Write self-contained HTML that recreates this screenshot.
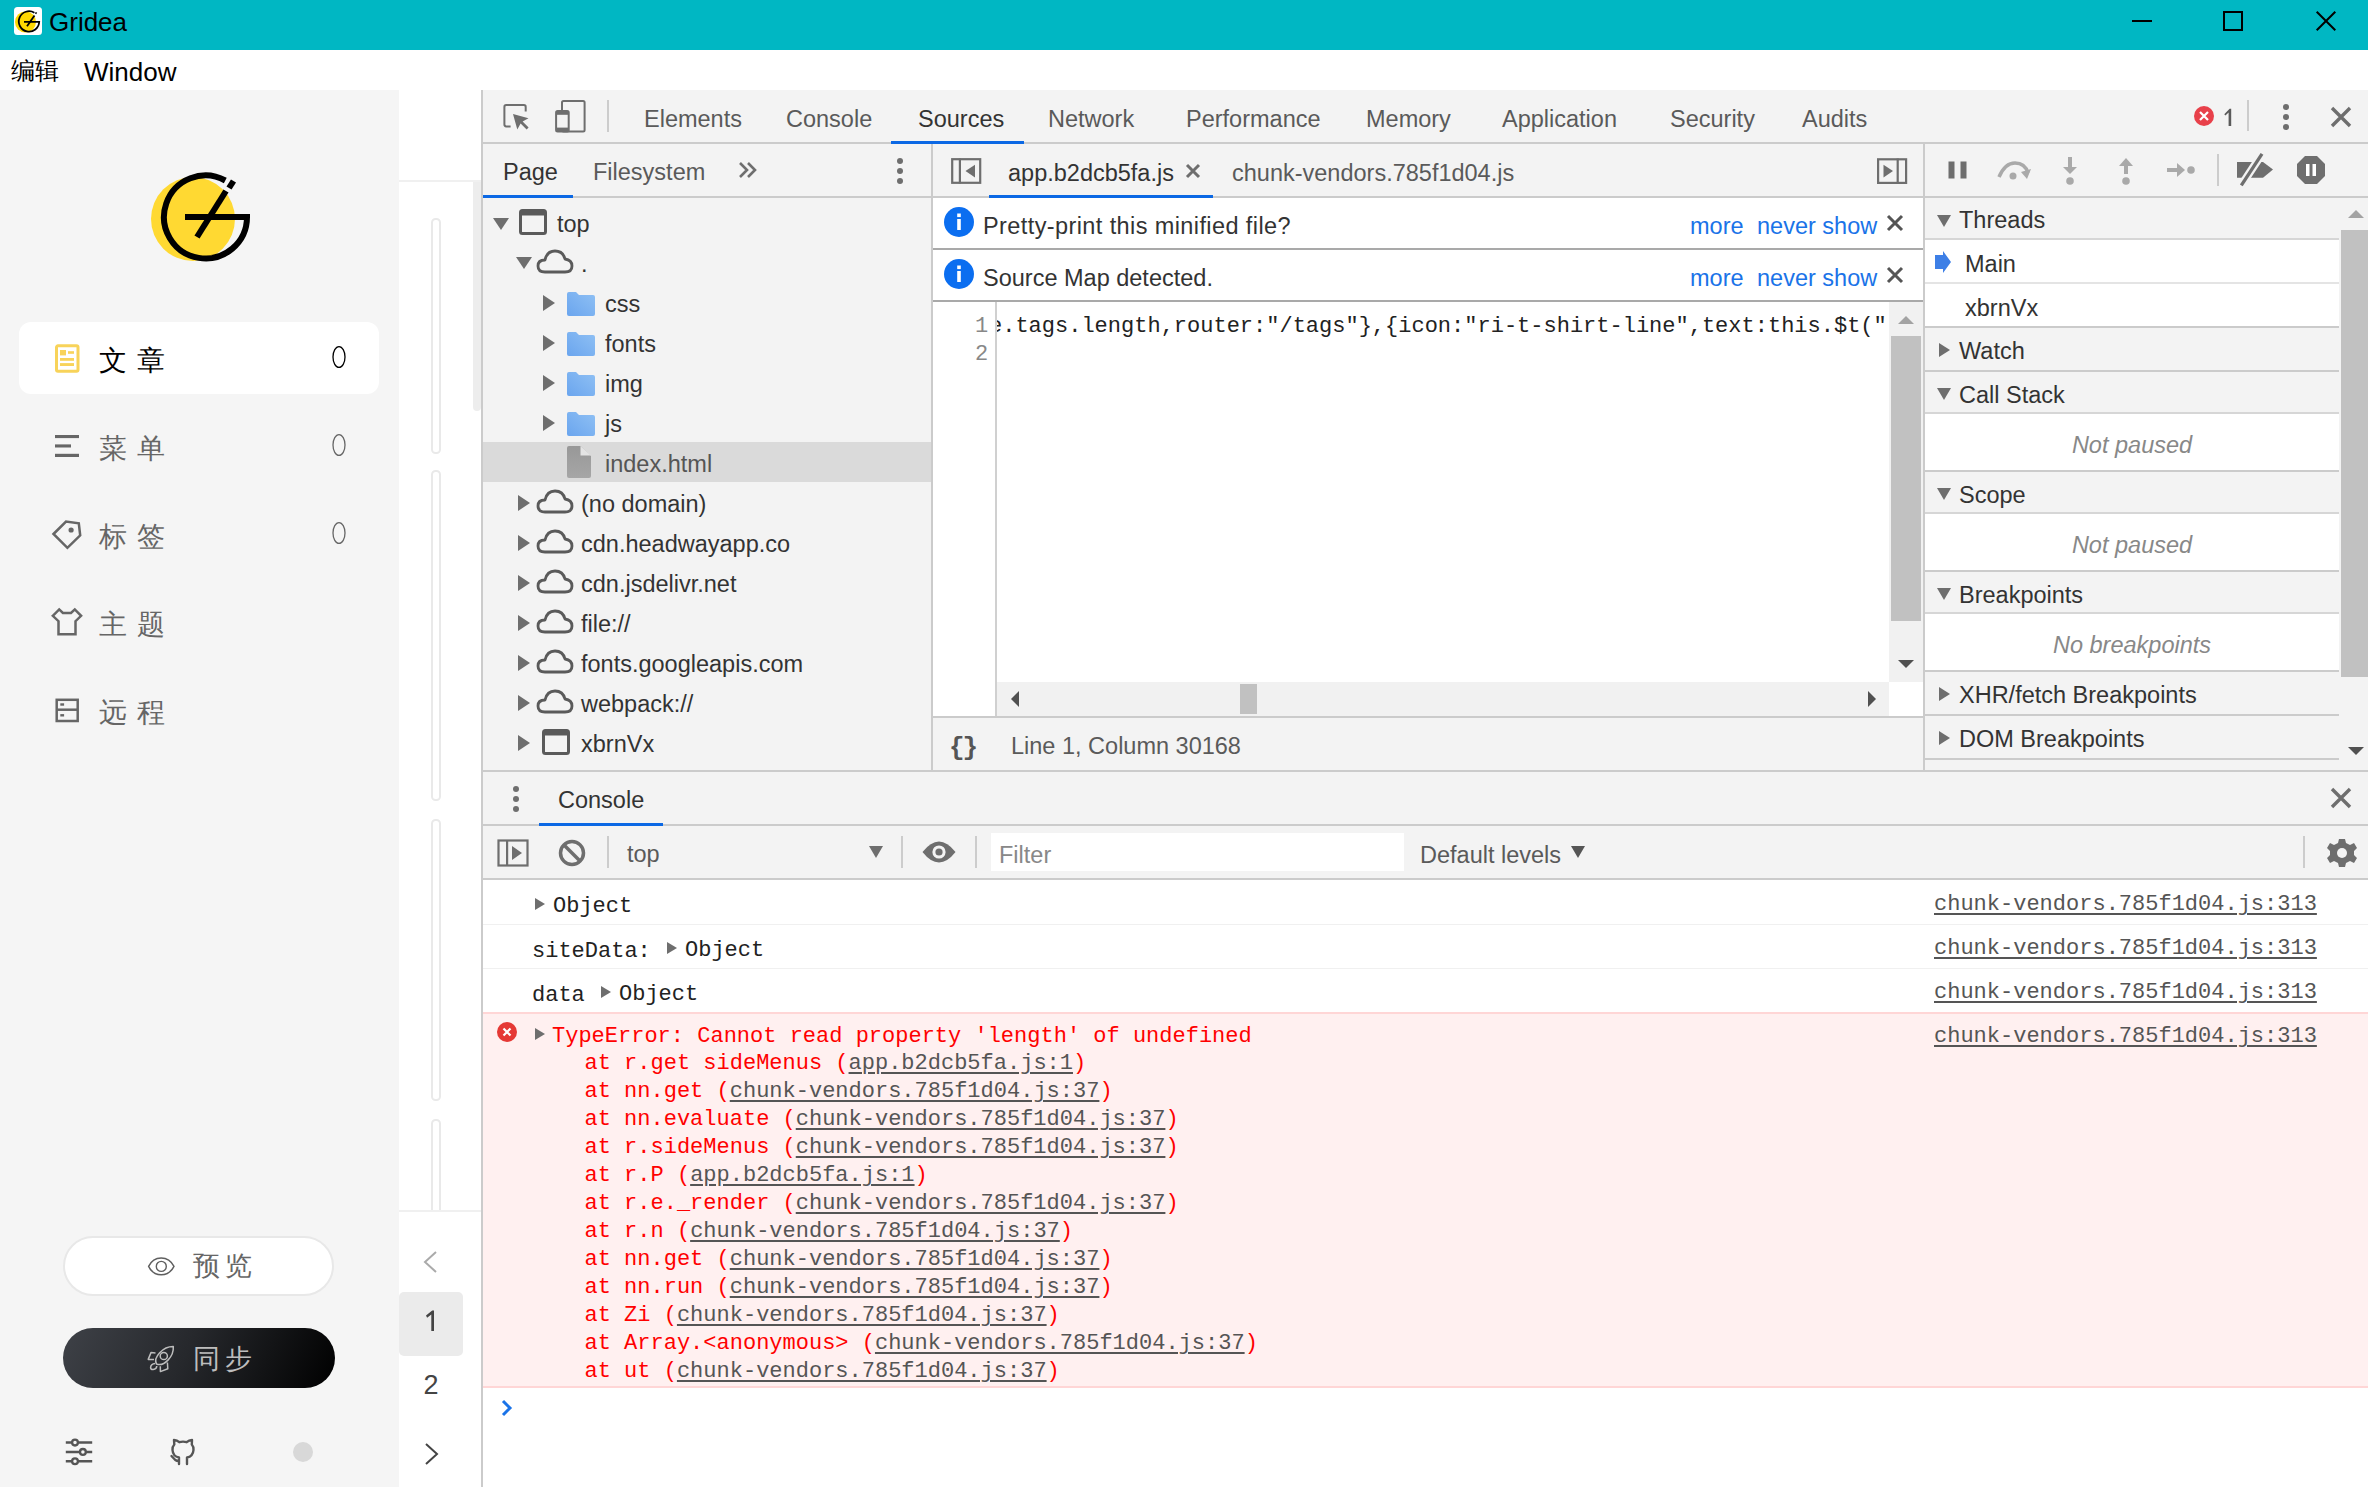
<!DOCTYPE html>
<html><head><meta charset="utf-8"><style>
html,body{margin:0;padding:0;width:2368px;height:1487px;overflow:hidden;background:#fff;position:relative;font-family:'Liberation Sans', sans-serif}
.t{position:absolute;white-space:pre;line-height:1}
svg{display:block}
</style></head><body>
<div style="position:absolute;left:0px;top:0px;width:2368px;height:50px;background:#00b7c3"></div>
<svg style="position:absolute;left:14px;top:7px;" width="28" height="28" viewBox="0 0 28 28"><rect x="0" y="0" width="28" height="28" rx="3.5" fill="#fff"/><circle cx="11.5" cy="15" r="10.5" fill="#ffd800"/><path d="M20.4 5.8 A10.2 10.2 0 1 0 25.2 14.8 L10 14.8" fill="none" stroke="#000" stroke-width="1.8"/><path d="M13 19.3 L20.5 8.4" stroke="#000" stroke-width="1.8"/><path d="M21.5 6.8 L22.5 5.4" stroke="#000" stroke-width="1.6"/></svg>
<div class="t" style="left:49px;top:8.99px;font-size:26px;color:#000;font-family:'Liberation Sans', sans-serif;">Gridea</div>
<div style="position:absolute;left:2132px;top:20px;width:20px;height:2px;background:#000"></div>
<div style="position:absolute;left:2223px;top:11px;width:20px;height:20px;border:2px solid #000;box-sizing:border-box"></div>
<svg style="position:absolute;left:2315px;top:10px;" width="22" height="22" viewBox="0 0 22 22"><path d="M1.7 1.7 L20.3 20.3 M20.3 1.7 L1.7 20.3" stroke="#000" stroke-width="2"/></svg>
<div style="position:absolute;left:0px;top:50px;width:2368px;height:40px;background:#fff"></div>
<div class="t" style="left:11px;top:60.32px;font-size:23.5px;color:#000;font-family:'Liberation Sans', sans-serif;">编辑</div>
<div class="t" style="left:84px;top:58.99px;font-size:26px;color:#000;font-family:'Liberation Sans', sans-serif;">Window</div>
<div style="position:absolute;left:0px;top:90px;width:399px;height:1397px;background:#f5f5f5"></div>
<svg style="position:absolute;left:140px;top:160px;" width="120" height="120" viewBox="0 0 120 120"><circle cx="53" cy="59" r="42" fill="#ffd932"/>
<path d="M85.3 20.5 A41.5 41.5 0 1 0 107 57 L45 57" fill="none" stroke="#000" stroke-width="6"/>
<path d="M57 77 L86 31" stroke="#000" stroke-width="6"/>
<path d="M89 28 L93.5 21" stroke="#000" stroke-width="6"/></svg>
<div style="position:absolute;left:19px;top:322px;width:360px;height:72px;background:#fff;border-radius:12px"></div>
<div class="t" style="left:99px;top:340.5px;font-size:28px;line-height:40px;color:#000;font-family:'Liberation Sans', sans-serif;letter-spacing:1px">文 章</div>
<svg style="position:absolute;left:330px;top:344px;" width="18" height="26" viewBox="0 0 18 26"><ellipse cx="9" cy="13" rx="6" ry="10.4" fill="none" stroke="#000" stroke-width="1.3"/></svg>
<div class="t" style="left:99px;top:428.5px;font-size:28px;line-height:40px;color:#666;font-family:'Liberation Sans', sans-serif;letter-spacing:1px">菜 单</div>
<svg style="position:absolute;left:330px;top:432px;" width="18" height="26" viewBox="0 0 18 26"><ellipse cx="9" cy="13" rx="6" ry="10.4" fill="none" stroke="#666" stroke-width="1.3"/></svg>
<div class="t" style="left:99px;top:516.5px;font-size:28px;line-height:40px;color:#666;font-family:'Liberation Sans', sans-serif;letter-spacing:1px">标 签</div>
<svg style="position:absolute;left:330px;top:520px;" width="18" height="26" viewBox="0 0 18 26"><ellipse cx="9" cy="13" rx="6" ry="10.4" fill="none" stroke="#666" stroke-width="1.3"/></svg>
<div class="t" style="left:99px;top:604.5px;font-size:28px;line-height:40px;color:#666;font-family:'Liberation Sans', sans-serif;letter-spacing:1px">主 题</div>
<div class="t" style="left:99px;top:692.5px;font-size:28px;line-height:40px;color:#666;font-family:'Liberation Sans', sans-serif;letter-spacing:1px">远 程</div>
<svg style="position:absolute;left:53px;top:342px;" width="28" height="32" viewBox="0 0 28 32"><rect x="3.5" y="3.8" width="21.5" height="25.5" rx="1.5" fill="none" stroke="#f8d35a" stroke-width="3"/><rect x="7" y="8" width="6" height="5.4" fill="#f8d35a"/><rect x="15" y="9.2" width="6" height="2.6" fill="#f8d35a"/><rect x="7" y="16" width="14" height="2.8" fill="#f8d35a"/><rect x="7" y="21.1" width="14" height="2.9" fill="#f8d35a"/></svg>
<svg style="position:absolute;left:53px;top:432px;" width="28" height="28" viewBox="0 0 28 28"><rect x="2" y="3" width="24" height="3.1" fill="#666"/><rect x="2" y="12.4" width="16" height="3.1" fill="#666"/><rect x="2" y="21.8" width="24" height="3.2" fill="#666"/></svg>
<svg style="position:absolute;left:40px;top:500px;" width="50" height="240" viewBox="0 0 50 240"><g fill="none" stroke="#666" stroke-width="2.5" stroke-linejoin="miter"><path d="M13.5 34 L26 21.5 L38.8 23.3 L40.2 35.4 L27.4 47.8 Z"/><path d="M12.8 115.8 L19.2 109.4 L22.9 113 L31 113 L34.8 109.4 L41.1 115.8 L35.5 121.2 L35.5 134.3 L18.5 134.3 L18.5 121.2 Z"/><rect x="16.7" y="199.8" width="21" height="21.2"/><path d="M16.7 209.7 L37.7 209.7"/></g><circle cx="31.1" cy="30" r="2.6" fill="#666"/><rect x="20.3" y="203.3" width="3.8" height="2.4" fill="#666"/><rect x="20.3" y="214.1" width="3.8" height="2.4" fill="#666"/></svg>
<div style="position:absolute;left:63px;top:1236px;width:271px;height:60px;background:#fff;border:2px solid #e8e8e8;border-radius:30px;box-sizing:border-box"></div>
<svg style="position:absolute;left:146px;top:1254px;" width="30" height="26" viewBox="0 0 30 26"><path d="M2.6 12.4 C8 1.2 22.3 1.2 28 12.4 C22.3 23.6 8 23.6 2.6 12.4 Z" fill="none" stroke="#5f5f5f" stroke-width="1.4"/><circle cx="15.3" cy="12.4" r="5" fill="none" stroke="#5f5f5f" stroke-width="1.4"/></svg>
<div class="t" style="left:193px;top:1246px;font-size:27px;line-height:40px;color:#666;letter-spacing:5px">预览</div>
<div style="position:absolute;left:63px;top:1328px;width:272px;height:60px;background:linear-gradient(115deg,#3e4147 0%,#26282c 45%,#000 100%);border-radius:30px"></div>
<svg style="position:absolute;left:140px;top:1336px;" width="40" height="40" viewBox="0 0 40 40"><g fill="none" stroke="#bdbdbd" stroke-width="1.5" stroke-linejoin="round"><path d="M16.5 28 C13 21.5 23 10.5 33.3 10.6 C34 20.5 24 31 16.5 28 Z"/><circle cx="23.8" cy="20" r="3.6"/><path d="M15.5 17 L11 16.6 L8.2 23.4 L14 23.6"/><path d="M27.4 26.5 L27.8 32.8 L20.4 35.6 L20.3 30.2"/><path d="M15.2 27.6 Q10.8 28 10.6 31.6 Q10.8 33.8 13.2 33.6 Q16.6 33.2 16.8 30"/></g></svg>
<div class="t" style="left:193px;top:1339px;font-size:27px;line-height:40px;color:#bdbdbd;letter-spacing:5px">同步</div>
<svg style="position:absolute;left:60px;top:1432px;" width="40" height="40" viewBox="0 0 40 40"><path d="M5.8 10.6 L32.2 10.6 M5.8 19.9 L32.2 19.9 M5.8 29.2 L32.2 29.2" stroke="#555" stroke-width="2.5"/><circle cx="15" cy="10.6" r="2.9" fill="#f5f5f5" stroke="#555" stroke-width="2.3"/><circle cx="22.9" cy="19.9" r="2.9" fill="#f5f5f5" stroke="#555" stroke-width="2.3"/><circle cx="15" cy="29.2" r="2.9" fill="#f5f5f5" stroke="#555" stroke-width="2.3"/></svg>
<svg style="position:absolute;left:168px;top:1437px;" width="30" height="30" viewBox="0 0 30 30"><path d="M11 27 L11 20.5 Q5 19.5 4.5 13 Q4.3 9.5 6.3 7.5 L6 3 Q9 3 11.3 5.2 Q15 4 18.7 5.2 Q21 3 24 3 L23.8 7.5 Q25.7 9.5 25.5 13 Q25 19.5 19 20.5 L19 27 M3.5 19 L7.3 23 Q9 24.2 11 24" fill="none" stroke="#555" stroke-width="2.4" stroke-linejoin="round" stroke-linecap="round"/></svg>
<div style="position:absolute;left:293px;top:1442px;width:20px;height:20px;border-radius:50%;background:#d8d8d8"></div>
<div style="position:absolute;left:399px;top:90px;width:82px;height:1397px;background:#fff"></div>
<div style="position:absolute;left:399px;top:180px;width:82px;height:2px;background:#f0f0f0"></div>
<div style="position:absolute;left:473px;top:182px;width:8px;height:229px;background:#ededed;border-radius:0 0 4px 4px"></div>
<div style="position:absolute;left:431px;top:218px;width:10px;height:236px;border:2px solid #e9e9e9;border-radius:4.5px;box-sizing:border-box"></div>
<div style="position:absolute;left:431px;top:470px;width:10px;height:331px;border:2px solid #e9e9e9;border-radius:4.5px;box-sizing:border-box"></div>
<div style="position:absolute;left:431px;top:819px;width:10px;height:282px;border:2px solid #e9e9e9;border-radius:4.5px;box-sizing:border-box"></div>
<div style="position:absolute;left:431px;top:1119px;width:10px;height:121px;border:2px solid #e9e9e9;border-radius:4.5px;box-sizing:border-box"></div>
<div style="position:absolute;left:399px;top:1210px;width:82px;height:277px;background:#fff"></div>
<div style="position:absolute;left:399px;top:1210px;width:82px;height:2px;background:#f0f0f0"></div>
<svg style="position:absolute;left:421px;top:1250px;" width="20" height="24" viewBox="0 0 20 24"><path d="M15 2 L4 12 L15 22" fill="none" stroke="#aaa" stroke-width="2"/></svg>
<div style="position:absolute;left:399px;top:1292px;width:64px;height:64px;background:#ebebeb;border-radius:5px"></div>
<svg style="position:absolute;left:420px;top:1305px;" width="20" height="30" viewBox="0 0 20 30"><path d="M6 10.6 L12.2 5.6 L14 5.6 L14 26 L11.3 26 L11.3 9.4 L7.1 12.7 Z" fill="#444"/></svg>
<div class="t" style="left:399px;top:1361px;width:64px;text-align:center;font-size:27px;line-height:48px;color:#444">2</div>
<svg style="position:absolute;left:421px;top:1442px;" width="20" height="24" viewBox="0 0 20 24"><path d="M5 2 L16 12 L5 22" fill="none" stroke="#444" stroke-width="2"/></svg>
<div style="position:absolute;left:481px;top:90px;width:1887px;height:1397px;background:#f3f3f3"></div>
<div style="position:absolute;left:481px;top:90px;width:2px;height:1397px;background:#cbcbcb"></div>
<div style="position:absolute;left:483px;top:142px;width:1885px;height:2px;background:#cbcbcb"></div>
<svg style="position:absolute;left:495px;top:95px;" width="40" height="40" viewBox="0 0 40 40"><path d="M15.6 31.4 L11.2 31.4 Q9.4 31.4 9.4 29.6 L9.4 11.9 Q9.4 10.1 11.2 10.1 L28.9 10.1 Q30.7 10.1 30.7 11.9 L30.7 16.6" fill="none" stroke="#6e6e6e" stroke-width="2"/><path d="M18 19 L33.5 23.3 L27.6 26.6 L33.6 32.6 L31.6 34.6 L25.6 28.6 L22.3 34.6 Z" fill="#6e6e6e"/></svg>
<svg style="position:absolute;left:553px;top:99px;" width="36" height="36" viewBox="0 0 36 36"><rect x="9" y="2" width="22.6" height="30.6" rx="1.5" fill="none" stroke="#6e6e6e" stroke-width="2"/><rect x="3.1" y="12" width="12.6" height="20.6" rx="1.5" fill="#f3f3f3" stroke="#6e6e6e" stroke-width="2"/><rect x="3.1" y="28.6" width="12.6" height="4" fill="#6e6e6e"/><rect x="3.1" y="12" width="12.6" height="3.8" fill="#6e6e6e"/></svg>
<div style="position:absolute;left:607px;top:100px;width:2px;height:32px;background:#ccc"></div>
<div class="t" style="left:644px;top:108.11px;font-size:23.5px;color:#5a5a5a;font-family:'Liberation Sans', sans-serif;">Elements</div>
<div class="t" style="left:786px;top:108.11px;font-size:23.5px;color:#5a5a5a;font-family:'Liberation Sans', sans-serif;">Console</div>
<div class="t" style="left:918px;top:108.11px;font-size:23.5px;color:#333;font-family:'Liberation Sans', sans-serif;">Sources</div>
<div class="t" style="left:1048px;top:108.11px;font-size:23.5px;color:#5a5a5a;font-family:'Liberation Sans', sans-serif;">Network</div>
<div class="t" style="left:1186px;top:108.11px;font-size:23.5px;color:#5a5a5a;font-family:'Liberation Sans', sans-serif;">Performance</div>
<div class="t" style="left:1366px;top:108.11px;font-size:23.5px;color:#5a5a5a;font-family:'Liberation Sans', sans-serif;">Memory</div>
<div class="t" style="left:1502px;top:108.11px;font-size:23.5px;color:#5a5a5a;font-family:'Liberation Sans', sans-serif;">Application</div>
<div class="t" style="left:1670px;top:108.11px;font-size:23.5px;color:#5a5a5a;font-family:'Liberation Sans', sans-serif;">Security</div>
<div class="t" style="left:1802px;top:108.11px;font-size:23.5px;color:#5a5a5a;font-family:'Liberation Sans', sans-serif;">Audits</div>
<div style="position:absolute;left:891px;top:141px;width:133px;height:3px;background:#0b68e4"></div>
<svg style="position:absolute;left:2193px;top:105px;" width="22" height="22" viewBox="0 0 22 22"><circle cx="11" cy="11" r="10" fill="#e8404a"/><path d="M7 7 L15 15 M15 7 L7 15" stroke="#fff" stroke-width="2.2"/></svg>
<svg style="position:absolute;left:2220px;top:105px;" width="16" height="24" viewBox="0 0 16 24"><path d="M4.3 9.2 L9.6 3.8 L11.2 3.8 L11.2 21 L8.6 21 L8.6 7.6 L5.4 10.6 Z" fill="#5a5a5a"/></svg>
<div style="position:absolute;left:2247px;top:100px;width:2px;height:31px;background:#ccc"></div>
<svg style="position:absolute;left:2280px;top:103px;" width="12" height="28" viewBox="0 0 12 28"><circle cx="6" cy="4" r="3" fill="#6e6e6e"/><circle cx="6" cy="14" r="3" fill="#6e6e6e"/><circle cx="6" cy="24" r="3" fill="#6e6e6e"/></svg>
<svg style="position:absolute;left:2329px;top:105px;" width="24" height="24" viewBox="0 0 24 24"><path d="M3 3 L21 21 M21 3 L3 21" stroke="#6e6e6e" stroke-width="3.4"/></svg>
<div style="position:absolute;left:483px;top:196px;width:448px;height:2px;background:#cbcbcb"></div>
<div class="t" style="left:503px;top:161.11px;font-size:23.5px;color:#333;font-family:'Liberation Sans', sans-serif;">Page</div>
<div class="t" style="left:593px;top:161.11px;font-size:23.5px;color:#5a5a5a;font-family:'Liberation Sans', sans-serif;">Filesystem</div>
<div style="position:absolute;left:483px;top:195px;width:90px;height:3px;background:#0b68e4"></div>
<svg style="position:absolute;left:737px;top:160px;" width="22" height="20" viewBox="0 0 22 20"><path d="M3 3 L10 10 L3 17 M11 3 L18 10 L11 17" fill="none" stroke="#6e6e6e" stroke-width="2.6"/></svg>
<svg style="position:absolute;left:894px;top:157px;" width="12" height="28" viewBox="0 0 12 28"><circle cx="6" cy="4" r="3" fill="#6e6e6e"/><circle cx="6" cy="14" r="3" fill="#6e6e6e"/><circle cx="6" cy="24" r="3" fill="#6e6e6e"/></svg>
<div style="position:absolute;left:931px;top:144px;width:2px;height:626px;background:#cbcbcb"></div>
<div style="position:absolute;left:483px;top:442px;width:448px;height:40px;background:#dadada"></div>
<svg style="position:absolute;left:493px;top:217px;" width="16" height="14" viewBox="0 0 16 14"><path d="M0 1 L16 1 L8 13 Z" fill="#6e6e6e"/></svg>
<svg style="position:absolute;left:519px;top:209px;" width="28" height="26" viewBox="0 0 28 26"><rect x="1.5" y="1.5" width="25" height="23" rx="2" fill="none" stroke="#5a5a5a" stroke-width="3"/><rect x="1.5" y="1.5" width="25" height="5" fill="#5a5a5a"/></svg>
<div class="t" style="left:557px;top:213.11px;font-size:23.5px;color:#333;font-family:'Liberation Sans', sans-serif;">top</div>
<svg style="position:absolute;left:516px;top:256px;" width="16" height="14" viewBox="0 0 16 14"><path d="M0 1 L16 1 L8 13 Z" fill="#6e6e6e"/></svg>
<svg style="position:absolute;left:536px;top:249px;" width="38" height="26" viewBox="0 0 38 26"><path d="M9 23 Q2 23 2 17 Q2 11 9 11 Q11 2 19 2 Q27 2 29 10 Q36 11 36 17 Q36 23 29 23 Z" fill="none" stroke="#5a5a5a" stroke-width="2.8" stroke-linejoin="round"/></svg>
<div class="t" style="left:581px;top:253.11px;font-size:23.5px;color:#333;font-family:'Liberation Sans', sans-serif;">.</div>
<svg style="position:absolute;left:542px;top:295px;" width="14" height="16" viewBox="0 0 14 16"><path d="M1 0 L13 8 L1 16 Z" fill="#6e6e6e"/></svg>
<svg style="position:absolute;left:566px;top:291px;" width="30" height="26" viewBox="0 0 30 26"><defs><linearGradient id="fo1" x1="0" y1="1" x2="1" y2="0"><stop offset="0" stop-color="#6aa5ee"/><stop offset="1" stop-color="#8fc0f4"/></linearGradient></defs><path d="M1 3 Q1 1 3 1 L10 1 L13 4 L27 4 Q29 4 29 6 L29 23 Q29 25 27 25 L3 25 Q1 25 1 23 Z" fill="url(#fo1)"/></svg>
<div class="t" style="left:605px;top:293.11px;font-size:23.5px;color:#333;font-family:'Liberation Sans', sans-serif;">css</div>
<svg style="position:absolute;left:542px;top:335px;" width="14" height="16" viewBox="0 0 14 16"><path d="M1 0 L13 8 L1 16 Z" fill="#6e6e6e"/></svg>
<svg style="position:absolute;left:566px;top:331px;" width="30" height="26" viewBox="0 0 30 26"><defs><linearGradient id="fo2" x1="0" y1="1" x2="1" y2="0"><stop offset="0" stop-color="#6aa5ee"/><stop offset="1" stop-color="#8fc0f4"/></linearGradient></defs><path d="M1 3 Q1 1 3 1 L10 1 L13 4 L27 4 Q29 4 29 6 L29 23 Q29 25 27 25 L3 25 Q1 25 1 23 Z" fill="url(#fo2)"/></svg>
<div class="t" style="left:605px;top:333.11px;font-size:23.5px;color:#333;font-family:'Liberation Sans', sans-serif;">fonts</div>
<svg style="position:absolute;left:542px;top:375px;" width="14" height="16" viewBox="0 0 14 16"><path d="M1 0 L13 8 L1 16 Z" fill="#6e6e6e"/></svg>
<svg style="position:absolute;left:566px;top:371px;" width="30" height="26" viewBox="0 0 30 26"><defs><linearGradient id="fo3" x1="0" y1="1" x2="1" y2="0"><stop offset="0" stop-color="#6aa5ee"/><stop offset="1" stop-color="#8fc0f4"/></linearGradient></defs><path d="M1 3 Q1 1 3 1 L10 1 L13 4 L27 4 Q29 4 29 6 L29 23 Q29 25 27 25 L3 25 Q1 25 1 23 Z" fill="url(#fo3)"/></svg>
<div class="t" style="left:605px;top:373.11px;font-size:23.5px;color:#333;font-family:'Liberation Sans', sans-serif;">img</div>
<svg style="position:absolute;left:542px;top:415px;" width="14" height="16" viewBox="0 0 14 16"><path d="M1 0 L13 8 L1 16 Z" fill="#6e6e6e"/></svg>
<svg style="position:absolute;left:566px;top:411px;" width="30" height="26" viewBox="0 0 30 26"><defs><linearGradient id="fo4" x1="0" y1="1" x2="1" y2="0"><stop offset="0" stop-color="#6aa5ee"/><stop offset="1" stop-color="#8fc0f4"/></linearGradient></defs><path d="M1 3 Q1 1 3 1 L10 1 L13 4 L27 4 Q29 4 29 6 L29 23 Q29 25 27 25 L3 25 Q1 25 1 23 Z" fill="url(#fo4)"/></svg>
<div class="t" style="left:605px;top:413.11px;font-size:23.5px;color:#333;font-family:'Liberation Sans', sans-serif;">js</div>
<svg style="position:absolute;left:566px;top:445px;" width="26" height="34" viewBox="0 0 26 34"><defs><linearGradient id="fg" x1="0" y1="0" x2="0" y2="1"><stop offset="0" stop-color="#989898"/><stop offset="1" stop-color="#a6a6a6"/></linearGradient></defs><path d="M1 3 Q1 1 3 1 L14.5 1 L25 11 L25 31 Q25 33 23 33 L3 33 Q1 33 1 31 Z" fill="url(#fg)"/><path d="M14.5 1 L14.5 10.5 L25 10.5 Z" fill="#e4e4e4"/></svg>
<div class="t" style="left:605px;top:453.11px;font-size:23.5px;color:#555;font-family:'Liberation Sans', sans-serif;">index.html</div>
<svg style="position:absolute;left:517px;top:495px;" width="14" height="16" viewBox="0 0 14 16"><path d="M1 0 L13 8 L1 16 Z" fill="#6e6e6e"/></svg>
<svg style="position:absolute;left:536px;top:489px;" width="38" height="26" viewBox="0 0 38 26"><path d="M9 23 Q2 23 2 17 Q2 11 9 11 Q11 2 19 2 Q27 2 29 10 Q36 11 36 17 Q36 23 29 23 Z" fill="none" stroke="#5a5a5a" stroke-width="2.8" stroke-linejoin="round"/></svg>
<div class="t" style="left:581px;top:493.11px;font-size:23.5px;color:#333;font-family:'Liberation Sans', sans-serif;">(no domain)</div>
<svg style="position:absolute;left:517px;top:535px;" width="14" height="16" viewBox="0 0 14 16"><path d="M1 0 L13 8 L1 16 Z" fill="#6e6e6e"/></svg>
<svg style="position:absolute;left:536px;top:529px;" width="38" height="26" viewBox="0 0 38 26"><path d="M9 23 Q2 23 2 17 Q2 11 9 11 Q11 2 19 2 Q27 2 29 10 Q36 11 36 17 Q36 23 29 23 Z" fill="none" stroke="#5a5a5a" stroke-width="2.8" stroke-linejoin="round"/></svg>
<div class="t" style="left:581px;top:533.11px;font-size:23.5px;color:#333;font-family:'Liberation Sans', sans-serif;">cdn.headwayapp.co</div>
<svg style="position:absolute;left:517px;top:575px;" width="14" height="16" viewBox="0 0 14 16"><path d="M1 0 L13 8 L1 16 Z" fill="#6e6e6e"/></svg>
<svg style="position:absolute;left:536px;top:569px;" width="38" height="26" viewBox="0 0 38 26"><path d="M9 23 Q2 23 2 17 Q2 11 9 11 Q11 2 19 2 Q27 2 29 10 Q36 11 36 17 Q36 23 29 23 Z" fill="none" stroke="#5a5a5a" stroke-width="2.8" stroke-linejoin="round"/></svg>
<div class="t" style="left:581px;top:573.11px;font-size:23.5px;color:#333;font-family:'Liberation Sans', sans-serif;">cdn.jsdelivr.net</div>
<svg style="position:absolute;left:517px;top:615px;" width="14" height="16" viewBox="0 0 14 16"><path d="M1 0 L13 8 L1 16 Z" fill="#6e6e6e"/></svg>
<svg style="position:absolute;left:536px;top:609px;" width="38" height="26" viewBox="0 0 38 26"><path d="M9 23 Q2 23 2 17 Q2 11 9 11 Q11 2 19 2 Q27 2 29 10 Q36 11 36 17 Q36 23 29 23 Z" fill="none" stroke="#5a5a5a" stroke-width="2.8" stroke-linejoin="round"/></svg>
<div class="t" style="left:581px;top:613.11px;font-size:23.5px;color:#333;font-family:'Liberation Sans', sans-serif;">file://</div>
<svg style="position:absolute;left:517px;top:655px;" width="14" height="16" viewBox="0 0 14 16"><path d="M1 0 L13 8 L1 16 Z" fill="#6e6e6e"/></svg>
<svg style="position:absolute;left:536px;top:649px;" width="38" height="26" viewBox="0 0 38 26"><path d="M9 23 Q2 23 2 17 Q2 11 9 11 Q11 2 19 2 Q27 2 29 10 Q36 11 36 17 Q36 23 29 23 Z" fill="none" stroke="#5a5a5a" stroke-width="2.8" stroke-linejoin="round"/></svg>
<div class="t" style="left:581px;top:653.11px;font-size:23.5px;color:#333;font-family:'Liberation Sans', sans-serif;">fonts.googleapis.com</div>
<svg style="position:absolute;left:517px;top:695px;" width="14" height="16" viewBox="0 0 14 16"><path d="M1 0 L13 8 L1 16 Z" fill="#6e6e6e"/></svg>
<svg style="position:absolute;left:536px;top:689px;" width="38" height="26" viewBox="0 0 38 26"><path d="M9 23 Q2 23 2 17 Q2 11 9 11 Q11 2 19 2 Q27 2 29 10 Q36 11 36 17 Q36 23 29 23 Z" fill="none" stroke="#5a5a5a" stroke-width="2.8" stroke-linejoin="round"/></svg>
<div class="t" style="left:581px;top:693.11px;font-size:23.5px;color:#333;font-family:'Liberation Sans', sans-serif;">webpack://</div>
<svg style="position:absolute;left:517px;top:735px;" width="14" height="16" viewBox="0 0 14 16"><path d="M1 0 L13 8 L1 16 Z" fill="#6e6e6e"/></svg>
<svg style="position:absolute;left:542px;top:729px;" width="28" height="26" viewBox="0 0 28 26"><rect x="1.5" y="1.5" width="25" height="23" rx="2" fill="none" stroke="#5a5a5a" stroke-width="3"/><rect x="1.5" y="1.5" width="25" height="5" fill="#5a5a5a"/></svg>
<div class="t" style="left:581px;top:733.11px;font-size:23.5px;color:#333;font-family:'Liberation Sans', sans-serif;">xbrnVx</div>
<div style="position:absolute;left:933px;top:196px;width:990px;height:2px;background:#cbcbcb"></div>
<svg style="position:absolute;left:950px;top:157px;" width="32" height="28" viewBox="0 0 32 28"><rect x="2.2" y="2.2" width="28" height="23.6" fill="none" stroke="#6e6e6e" stroke-width="2.2"/><rect x="8.8" y="1.5" width="2.2" height="25" fill="#6e6e6e"/><path d="M25 7.8 L15.5 14 L25 20.4 Z" fill="#6e6e6e"/></svg>
<div class="t" style="left:1008px;top:161.61px;font-size:23.5px;color:#333;font-family:'Liberation Sans', sans-serif;">app.b2dcb5fa.js</div>
<svg style="position:absolute;left:1185px;top:163px;" width="16" height="16" viewBox="0 0 16 16"><path d="M2 2 L14 14 M14 2 L2 14" stroke="#6e6e6e" stroke-width="3"/></svg>
<div style="position:absolute;left:989px;top:195px;width:224px;height:3px;background:#0b68e4"></div>
<div class="t" style="left:1232px;top:161.61px;font-size:23.5px;color:#5a5a5a;font-family:'Liberation Sans', sans-serif;">chunk-vendors.785f1d04.js</div>
<svg style="position:absolute;left:1876px;top:157px;" width="32" height="28" viewBox="0 0 32 28"><rect x="2.1" y="2.3" width="28" height="23.6" fill="none" stroke="#6e6e6e" stroke-width="2.2"/><rect x="20.6" y="1.5" width="2.2" height="25" fill="#6e6e6e"/><path d="M7.5 7.8 L17 14 L7.5 20.4 Z" fill="#6e6e6e"/></svg>
<div style="position:absolute;left:933px;top:198px;width:990px;height:50px;background:#fff"></div>
<div style="position:absolute;left:933px;top:248px;width:990px;height:2px;background:#a9a9a9"></div>
<svg style="position:absolute;left:944px;top:207px;" width="30" height="30" viewBox="0 0 30 30"><circle cx="15" cy="15" r="15" fill="#0b6ef0"/><rect x="13.2" y="12" width="3.6" height="11" fill="#fff"/><rect x="13.2" y="6.5" width="3.6" height="3.6" fill="#fff"/></svg>
<div class="t" style="left:983px;top:215.11px;font-size:23.5px;color:#333;font-family:'Liberation Sans', sans-serif;letter-spacing:0.4px">Pretty-print this minified file?</div>
<div class="t" style="left:1690px;top:215.11px;font-size:23.5px;color:#1a73e8;font-family:'Liberation Sans', sans-serif;">more</div>
<div class="t" style="left:1757px;top:215.11px;font-size:23.5px;color:#1a73e8;font-family:'Liberation Sans', sans-serif;">never show</div>
<svg style="position:absolute;left:1886px;top:214px;" width="18" height="18" viewBox="0 0 18 18"><path d="M2 2 L16 16 M16 2 L2 16" stroke="#555" stroke-width="3"/></svg>
<div style="position:absolute;left:933px;top:250px;width:990px;height:50px;background:#fff"></div>
<div style="position:absolute;left:933px;top:300px;width:990px;height:2px;background:#a9a9a9"></div>
<svg style="position:absolute;left:944px;top:259px;" width="30" height="30" viewBox="0 0 30 30"><circle cx="15" cy="15" r="15" fill="#0b6ef0"/><rect x="13.2" y="12" width="3.6" height="11" fill="#fff"/><rect x="13.2" y="6.5" width="3.6" height="3.6" fill="#fff"/></svg>
<div class="t" style="left:983px;top:267.11px;font-size:23.5px;color:#333;font-family:'Liberation Sans', sans-serif;">Source Map detected.</div>
<div class="t" style="left:1690px;top:267.11px;font-size:23.5px;color:#1a73e8;font-family:'Liberation Sans', sans-serif;">more</div>
<div class="t" style="left:1757px;top:267.11px;font-size:23.5px;color:#1a73e8;font-family:'Liberation Sans', sans-serif;">never show</div>
<svg style="position:absolute;left:1886px;top:266px;" width="18" height="18" viewBox="0 0 18 18"><path d="M2 2 L16 16 M16 2 L2 16" stroke="#555" stroke-width="3"/></svg>
<div style="position:absolute;left:933px;top:302px;width:990px;height:414px;background:#fff"></div>
<div style="position:absolute;left:995px;top:302px;width:2px;height:414px;background:#d0d0d0"></div>
<div class="t" style="left:975px;top:316.35px;font-size:22px;color:#888;font-family:'Liberation Mono', monospace;">1</div>
<div class="t" style="left:975px;top:344.15px;font-size:22px;color:#888;font-family:'Liberation Mono', monospace;">2</div>
<div style="position:absolute;left:997px;top:302px;width:892px;height:60px;overflow:hidden"><div class="t" style="left:-8px;top:13.85px;font-size:22px;color:#222;font-family:'Liberation Mono', monospace">e.tags.length,router:"/tags"},{icon:"ri-t-shirt-line",text:this.$t("</div></div>
<div style="position:absolute;left:1889px;top:302px;width:34px;height:380px;background:#f1f1f1"></div>
<div style="position:absolute;left:1891px;top:336px;width:30px;height:285px;background:#c1c1c1"></div>
<svg style="position:absolute;left:1897px;top:313px;" width="18" height="12" viewBox="0 0 18 12"><path d="M1 11 L9 3 L17 11 Z" fill="#a3a3a3"/></svg>
<svg style="position:absolute;left:1897px;top:659px;" width="18" height="12" viewBox="0 0 18 12"><path d="M1 1 L9 9 L17 1 Z" fill="#505050"/></svg>
<div style="position:absolute;left:997px;top:682px;width:892px;height:34px;background:#f1f1f1"></div>
<div style="position:absolute;left:1240px;top:684px;width:17px;height:30px;background:#c1c1c1"></div>
<svg style="position:absolute;left:1008px;top:690px;" width="12" height="18" viewBox="0 0 12 18"><path d="M11 1 L3 9 L11 17 Z" fill="#505050"/></svg>
<svg style="position:absolute;left:1867px;top:690px;" width="12" height="18" viewBox="0 0 12 18"><path d="M1 1 L9 9 L1 17 Z" fill="#505050"/></svg>
<div style="position:absolute;left:1889px;top:682px;width:34px;height:34px;background:#fff"></div>
<div style="position:absolute;left:933px;top:716px;width:990px;height:2px;background:#cbcbcb"></div>
<div class="t" style="left:949px;top:735.08px;font-size:26px;color:#555;font-family:'Liberation Mono', monospace;font-weight:bold;letter-spacing:-2px">{}</div>
<div class="t" style="left:1011px;top:735.11px;font-size:23.5px;color:#5a5a5a;font-family:'Liberation Sans', sans-serif;">Line 1, Column 30168</div>
<div style="position:absolute;left:1923px;top:144px;width:2px;height:626px;background:#cbcbcb"></div>
<div style="position:absolute;left:1925px;top:196px;width:443px;height:2px;background:#cbcbcb"></div>
<svg style="position:absolute;left:1947px;top:160px;" width="22" height="20" viewBox="0 0 22 20"><rect x="1.5" y="1.5" width="6" height="17" fill="#6e6e6e"/><rect x="13.5" y="1.5" width="6" height="17" fill="#6e6e6e"/></svg>
<svg style="position:absolute;left:1995px;top:157px;" width="40" height="28" viewBox="0 0 40 28"><path d="M4 20 Q10 6 20 6 Q30 6 33 16" fill="none" stroke="#a9a9a9" stroke-width="3.5"/><path d="M36 12 L32 22 L26 15 Z" fill="#a9a9a9"/><circle cx="18" cy="19" r="3.5" fill="#a9a9a9"/></svg>
<svg style="position:absolute;left:2060px;top:156px;" width="20" height="32" viewBox="0 0 20 32"><rect x="8" y="1" width="4" height="12" fill="#a9a9a9"/><path d="M3 11 L17 11 L10 18 Z" fill="#a9a9a9"/><circle cx="10" cy="25" r="3.8" fill="#a9a9a9"/></svg>
<svg style="position:absolute;left:2116px;top:156px;" width="20" height="32" viewBox="0 0 20 32"><rect x="8" y="8" width="4" height="10" fill="#a9a9a9"/><path d="M3 10 L17 10 L10 2 Z" fill="#a9a9a9"/><circle cx="10" cy="25" r="3.8" fill="#a9a9a9"/></svg>
<svg style="position:absolute;left:2165px;top:160px;" width="32" height="20" viewBox="0 0 32 20"><rect x="2" y="8" width="12" height="4" fill="#a9a9a9"/><path d="M12 3 L12 17 L20 10 Z" fill="#a9a9a9"/><circle cx="26" cy="10" r="3.8" fill="#a9a9a9"/></svg>
<div style="position:absolute;left:2217px;top:154px;width:2px;height:32px;background:#ccc"></div>
<svg style="position:absolute;left:2235px;top:152px;" width="40" height="36" viewBox="0 0 40 36"><path d="M2 10 L28 10 L38 17.6 L28 25.8 L2 25.8 Z" fill="#6e6e6e"/><path d="M6.3 33.4 L27 1.9" stroke="#f3f3f3" stroke-width="8"/><path d="M6.3 33.4 L27 1.9" stroke="#6e6e6e" stroke-width="3.3"/></svg>
<svg style="position:absolute;left:2296px;top:155px;" width="30" height="30" viewBox="0 0 30 30"><path d="M9 1 L21 1 L29 9 L29 21 L21 29 L9 29 L1 21 L1 9 Z" fill="#6e6e6e"/><rect x="10" y="9" width="3.5" height="12" fill="#fff"/><rect x="16.5" y="9" width="3.5" height="12" fill="#fff"/></svg>
<div style="position:absolute;left:1925px;top:198px;width:414px;height:41px;background:#f3f3f3"></div>
<svg style="position:absolute;left:1936px;top:214px;" width="16" height="14" viewBox="0 0 16 14"><path d="M1 1 L15 1 L8 13 Z" fill="#6e6e6e"/></svg>
<div class="t" style="left:1959px;top:209.11px;font-size:23.5px;color:#333;font-family:'Liberation Sans', sans-serif;">Threads</div>
<div style="position:absolute;left:1925px;top:239px;width:414px;height:44px;background:#fff"></div>
<svg style="position:absolute;left:1934px;top:251px;" width="18" height="22" viewBox="0 0 18 22"><path d="M1 4 L9 4 L9 0 L17 11 L9 22 L9 18 L1 18 Z" fill="#3d7fe6"/></svg>
<div class="t" style="left:1965px;top:253.11px;font-size:23.5px;color:#333;font-family:'Liberation Sans', sans-serif;">Main</div>
<div style="position:absolute;left:1925px;top:283px;width:414px;height:44px;background:#fff"></div>
<div class="t" style="left:1965px;top:296.51px;font-size:23.5px;color:#333;font-family:'Liberation Sans', sans-serif;">xbrnVx</div>
<div style="position:absolute;left:1925px;top:327px;width:414px;height:44px;background:#f3f3f3"></div>
<svg style="position:absolute;left:1938px;top:342px;" width="14" height="16" viewBox="0 0 14 16"><path d="M1 1 L12 8 L1 15 Z" fill="#6e6e6e"/></svg>
<div class="t" style="left:1959px;top:339.61px;font-size:23.5px;color:#333;font-family:'Liberation Sans', sans-serif;">Watch</div>
<div style="position:absolute;left:1925px;top:371px;width:414px;height:42px;background:#f3f3f3"></div>
<svg style="position:absolute;left:1936px;top:387px;" width="16" height="14" viewBox="0 0 16 14"><path d="M1 1 L15 1 L8 13 Z" fill="#6e6e6e"/></svg>
<div class="t" style="left:1959px;top:383.61px;font-size:23.5px;color:#333;font-family:'Liberation Sans', sans-serif;">Call Stack</div>
<div style="position:absolute;left:1925px;top:413px;width:414px;height:58px;background:#fff"></div>
<div class="t" style="left:1925px;top:433.61px;width:414px;text-align:center;font-size:23.5px;color:#888;font-style:italic;font-family:'Liberation Sans', sans-serif">Not paused</div>
<div style="position:absolute;left:1925px;top:471px;width:414px;height:42px;background:#f3f3f3"></div>
<svg style="position:absolute;left:1936px;top:487px;" width="16" height="14" viewBox="0 0 16 14"><path d="M1 1 L15 1 L8 13 Z" fill="#6e6e6e"/></svg>
<div class="t" style="left:1959px;top:483.61px;font-size:23.5px;color:#333;font-family:'Liberation Sans', sans-serif;">Scope</div>
<div style="position:absolute;left:1925px;top:513px;width:414px;height:58px;background:#fff"></div>
<div class="t" style="left:1925px;top:533.61px;width:414px;text-align:center;font-size:23.5px;color:#888;font-style:italic;font-family:'Liberation Sans', sans-serif">Not paused</div>
<div style="position:absolute;left:1925px;top:571px;width:414px;height:42px;background:#f3f3f3"></div>
<svg style="position:absolute;left:1936px;top:587px;" width="16" height="14" viewBox="0 0 16 14"><path d="M1 1 L15 1 L8 13 Z" fill="#6e6e6e"/></svg>
<div class="t" style="left:1959px;top:583.61px;font-size:23.5px;color:#333;font-family:'Liberation Sans', sans-serif;">Breakpoints</div>
<div style="position:absolute;left:1925px;top:613px;width:414px;height:58px;background:#fff"></div>
<div class="t" style="left:1925px;top:633.61px;width:414px;text-align:center;font-size:23.5px;color:#888;font-style:italic;font-family:'Liberation Sans', sans-serif">No breakpoints</div>
<div style="position:absolute;left:1925px;top:671px;width:414px;height:44px;background:#f3f3f3"></div>
<svg style="position:absolute;left:1938px;top:686px;" width="14" height="16" viewBox="0 0 14 16"><path d="M1 1 L12 8 L1 15 Z" fill="#6e6e6e"/></svg>
<div class="t" style="left:1959px;top:683.61px;font-size:23.5px;color:#333;font-family:'Liberation Sans', sans-serif;">XHR/fetch Breakpoints</div>
<div style="position:absolute;left:1925px;top:715px;width:414px;height:44px;background:#f3f3f3"></div>
<svg style="position:absolute;left:1938px;top:730px;" width="14" height="16" viewBox="0 0 14 16"><path d="M1 1 L12 8 L1 15 Z" fill="#6e6e6e"/></svg>
<div class="t" style="left:1959px;top:727.61px;font-size:23.5px;color:#333;font-family:'Liberation Sans', sans-serif;">DOM Breakpoints</div>
<div style="position:absolute;left:1925px;top:238px;width:414px;height:2px;background:#d6d6d6"></div>
<div style="position:absolute;left:1925px;top:282px;width:414px;height:2px;background:#e4e4e4"></div>
<div style="position:absolute;left:1925px;top:326px;width:414px;height:2px;background:#cbcbcb"></div>
<div style="position:absolute;left:1925px;top:370px;width:414px;height:2px;background:#cbcbcb"></div>
<div style="position:absolute;left:1925px;top:412px;width:414px;height:2px;background:#d6d6d6"></div>
<div style="position:absolute;left:1925px;top:470px;width:414px;height:2px;background:#cbcbcb"></div>
<div style="position:absolute;left:1925px;top:512px;width:414px;height:2px;background:#d6d6d6"></div>
<div style="position:absolute;left:1925px;top:570px;width:414px;height:2px;background:#cbcbcb"></div>
<div style="position:absolute;left:1925px;top:612px;width:414px;height:2px;background:#d6d6d6"></div>
<div style="position:absolute;left:1925px;top:670px;width:414px;height:2px;background:#cbcbcb"></div>
<div style="position:absolute;left:1925px;top:714px;width:414px;height:2px;background:#cbcbcb"></div>
<div style="position:absolute;left:1925px;top:758px;width:414px;height:2px;background:#cbcbcb"></div>
<div style="position:absolute;left:2339px;top:198px;width:29px;height:572px;background:#f3f3f3"></div>
<div style="position:absolute;left:2341px;top:230px;width:27px;height:447px;background:#c1c1c1"></div>
<svg style="position:absolute;left:2347px;top:207px;" width="18" height="12" viewBox="0 0 18 12"><path d="M1 11 L9 3 L17 11 Z" fill="#a3a3a3"/></svg>
<svg style="position:absolute;left:2347px;top:746px;" width="18" height="12" viewBox="0 0 18 12"><path d="M1 1 L9 9 L17 1 Z" fill="#505050"/></svg>
<div style="position:absolute;left:483px;top:770px;width:1885px;height:2px;background:#cbcbcb"></div>
<svg style="position:absolute;left:510px;top:785px;" width="12" height="28" viewBox="0 0 12 28"><circle cx="6" cy="4" r="3" fill="#6e6e6e"/><circle cx="6" cy="14" r="3" fill="#6e6e6e"/><circle cx="6" cy="24" r="3" fill="#6e6e6e"/></svg>
<div class="t" style="left:558px;top:789.11px;font-size:23.5px;color:#333;font-family:'Liberation Sans', sans-serif;">Console</div>
<div style="position:absolute;left:483px;top:824px;width:1885px;height:2px;background:#cbcbcb"></div>
<div style="position:absolute;left:539px;top:823px;width:124px;height:3px;background:#0b68e4"></div>
<svg style="position:absolute;left:2329px;top:786px;" width="24" height="24" viewBox="0 0 24 24"><path d="M3 3 L21 21 M21 3 L3 21" stroke="#6e6e6e" stroke-width="3.4"/></svg>
<svg style="position:absolute;left:497px;top:839px;" width="34" height="28" viewBox="0 0 34 28"><rect x="1.5" y="1.5" width="29" height="25" fill="none" stroke="#6e6e6e" stroke-width="2.2"/><rect x="9" y="1.5" width="2.2" height="25" fill="#6e6e6e"/><path d="M15 7 L25 14 L15 21 Z" fill="#6e6e6e"/></svg>
<svg style="position:absolute;left:557px;top:838px;" width="30" height="30" viewBox="0 0 30 30"><circle cx="15" cy="15" r="11.5" fill="none" stroke="#6e6e6e" stroke-width="3.5"/><path d="M7 7 L23 23" stroke="#6e6e6e" stroke-width="3.5"/></svg>
<div style="position:absolute;left:607px;top:836px;width:2px;height:32px;background:#ccc"></div>
<div class="t" style="left:627px;top:843.11px;font-size:23.5px;color:#5a5a5a;font-family:'Liberation Sans', sans-serif;">top</div>
<svg style="position:absolute;left:868px;top:845px;" width="16" height="14" viewBox="0 0 16 14"><path d="M1 1 L15 1 L8 13 Z" fill="#6e6e6e"/></svg>
<div style="position:absolute;left:901px;top:836px;width:2px;height:32px;background:#ccc"></div>
<svg style="position:absolute;left:921px;top:840px;" width="36" height="25" viewBox="0 0 36 25"><path d="M1.5 12 Q18 -9 34.5 12 Q18 33 1.5 12 Z" fill="#6e6e6e"/><circle cx="18" cy="12" r="6.6" fill="#f3f3f3"/><circle cx="18" cy="12" r="3.6" fill="#6e6e6e"/></svg>
<div style="position:absolute;left:975px;top:836px;width:2px;height:32px;background:#ccc"></div>
<div style="position:absolute;left:991px;top:833px;width:413px;height:38px;background:#fff"></div>
<div class="t" style="left:999px;top:844.11px;font-size:23.5px;color:#888;font-family:'Liberation Sans', sans-serif;">Filter</div>
<div class="t" style="left:1420px;top:844.11px;font-size:23.5px;color:#5a5a5a;font-family:'Liberation Sans', sans-serif;">Default levels</div>
<svg style="position:absolute;left:1570px;top:845px;" width="16" height="14" viewBox="0 0 16 14"><path d="M1 1 L15 1 L8 13 Z" fill="#555"/></svg>
<div style="position:absolute;left:2303px;top:836px;width:2px;height:32px;background:#ccc"></div>
<svg style="position:absolute;left:2326px;top:837px;" width="32" height="32" viewBox="0 0 32 32"><path d="M13 2 L19 2 L20 6 L24 8 L28 6 L31 11 L28 14 L28 18 L31 21 L28 26 L24 24 L20 26 L19 30 L13 30 L12 26 L8 24 L4 26 L1 21 L4 18 L4 14 L1 11 L4 6 L8 8 L12 6 Z" fill="#6e6e6e"/><circle cx="16" cy="16" r="5" fill="#f3f3f3"/></svg>
<div style="position:absolute;left:483px;top:878px;width:1885px;height:2px;background:#cbcbcb"></div>
<div style="position:absolute;left:483px;top:880px;width:1885px;height:607px;background:#fff"></div>
<div style="position:absolute;left:483px;top:924px;width:1885px;height:1px;background:#f0f0f0"></div>
<div style="position:absolute;left:483px;top:968px;width:1885px;height:1px;background:#f0f0f0"></div>
<div style="position:absolute;left:483px;top:1012px;width:1885px;height:1px;background:#f0f0f0"></div>
<svg style="position:absolute;left:534px;top:897px;" width="12" height="14" viewBox="0 0 12 14"><path d="M1 1 L11 7 L1 13 Z" fill="#6e6e6e"/></svg>
<div class="t" style="left:553px;top:896.15px;font-size:22px;color:#222;font-family:'Liberation Mono', monospace;">Object</div>
<div class="t" style="left:532px;top:941.15px;font-size:22px;color:#222;font-family:'Liberation Mono', monospace;">siteData:</div>
<svg style="position:absolute;left:666px;top:941px;" width="12" height="14" viewBox="0 0 12 14"><path d="M1 1 L11 7 L1 13 Z" fill="#6e6e6e"/></svg>
<div class="t" style="left:685px;top:940.15px;font-size:22px;color:#222;font-family:'Liberation Mono', monospace;">Object</div>
<div class="t" style="left:532px;top:985.15px;font-size:22px;color:#222;font-family:'Liberation Mono', monospace;">data</div>
<svg style="position:absolute;left:600px;top:985px;" width="12" height="14" viewBox="0 0 12 14"><path d="M1 1 L11 7 L1 13 Z" fill="#6e6e6e"/></svg>
<div class="t" style="left:619px;top:984.15px;font-size:22px;color:#222;font-family:'Liberation Mono', monospace;">Object</div>
<div style="position:absolute;left:483px;top:1013px;width:1885px;height:374px;background:#fff0f0"></div>
<div style="position:absolute;left:483px;top:1012px;width:1885px;height:2px;background:#ffd6d6"></div>
<div style="position:absolute;left:483px;top:1386px;width:1885px;height:2px;background:#ffd6d6"></div>
<svg style="position:absolute;left:497px;top:1022px;" width="20" height="20" viewBox="0 0 20 20"><circle cx="10" cy="10" r="10" fill="#e53935"/><path d="M6.5 6.5 L13.5 13.5 M13.5 6.5 L6.5 13.5" stroke="#fff" stroke-width="2.2"/></svg>
<svg style="position:absolute;left:534px;top:1027px;" width="12" height="14" viewBox="0 0 12 14"><path d="M1 1 L11 7 L1 13 Z" fill="#6e6e6e"/></svg>
<div class="t" style="left:1934px;top:894.15px;font-size:22px;color:#555;font-family:'Liberation Mono', monospace;text-decoration:underline;text-underline-offset:3px">chunk-vendors.785f1d04.js:313</div>
<div class="t" style="left:1934px;top:938.15px;font-size:22px;color:#555;font-family:'Liberation Mono', monospace;text-decoration:underline;text-underline-offset:3px">chunk-vendors.785f1d04.js:313</div>
<div class="t" style="left:1934px;top:982.15px;font-size:22px;color:#555;font-family:'Liberation Mono', monospace;text-decoration:underline;text-underline-offset:3px">chunk-vendors.785f1d04.js:313</div>
<div class="t" style="left:1934px;top:1026.15px;font-size:22px;color:#555;font-family:'Liberation Mono', monospace;text-decoration:underline;text-underline-offset:3px">chunk-vendors.785f1d04.js:313</div>
<div class="t" style="left:552px;top:1026.15px;font-size:22px;color:#ff0000;font-family:'Liberation Mono', monospace;">TypeError: Cannot read property 'length' of undefined</div>
<div class="t" style="left:584.5px;top:1053.15px;font-size:22px;color:#ff0000;font-family:'Liberation Mono', monospace">at r.get sideMenus (<span style="color:#555;text-decoration:underline;text-underline-offset:3px">app.b2dcb5fa.js:1</span>)</div>
<div class="t" style="left:584.5px;top:1081.15px;font-size:22px;color:#ff0000;font-family:'Liberation Mono', monospace">at nn.get (<span style="color:#555;text-decoration:underline;text-underline-offset:3px">chunk-vendors.785f1d04.js:37</span>)</div>
<div class="t" style="left:584.5px;top:1109.15px;font-size:22px;color:#ff0000;font-family:'Liberation Mono', monospace">at nn.evaluate (<span style="color:#555;text-decoration:underline;text-underline-offset:3px">chunk-vendors.785f1d04.js:37</span>)</div>
<div class="t" style="left:584.5px;top:1137.15px;font-size:22px;color:#ff0000;font-family:'Liberation Mono', monospace">at r.sideMenus (<span style="color:#555;text-decoration:underline;text-underline-offset:3px">chunk-vendors.785f1d04.js:37</span>)</div>
<div class="t" style="left:584.5px;top:1165.15px;font-size:22px;color:#ff0000;font-family:'Liberation Mono', monospace">at r.P (<span style="color:#555;text-decoration:underline;text-underline-offset:3px">app.b2dcb5fa.js:1</span>)</div>
<div class="t" style="left:584.5px;top:1193.15px;font-size:22px;color:#ff0000;font-family:'Liberation Mono', monospace">at r.e._render (<span style="color:#555;text-decoration:underline;text-underline-offset:3px">chunk-vendors.785f1d04.js:37</span>)</div>
<div class="t" style="left:584.5px;top:1221.15px;font-size:22px;color:#ff0000;font-family:'Liberation Mono', monospace">at r.n (<span style="color:#555;text-decoration:underline;text-underline-offset:3px">chunk-vendors.785f1d04.js:37</span>)</div>
<div class="t" style="left:584.5px;top:1249.15px;font-size:22px;color:#ff0000;font-family:'Liberation Mono', monospace">at nn.get (<span style="color:#555;text-decoration:underline;text-underline-offset:3px">chunk-vendors.785f1d04.js:37</span>)</div>
<div class="t" style="left:584.5px;top:1277.15px;font-size:22px;color:#ff0000;font-family:'Liberation Mono', monospace">at nn.run (<span style="color:#555;text-decoration:underline;text-underline-offset:3px">chunk-vendors.785f1d04.js:37</span>)</div>
<div class="t" style="left:584.5px;top:1305.15px;font-size:22px;color:#ff0000;font-family:'Liberation Mono', monospace">at Zi (<span style="color:#555;text-decoration:underline;text-underline-offset:3px">chunk-vendors.785f1d04.js:37</span>)</div>
<div class="t" style="left:584.5px;top:1333.15px;font-size:22px;color:#ff0000;font-family:'Liberation Mono', monospace">at Array.&lt;anonymous&gt; (<span style="color:#555;text-decoration:underline;text-underline-offset:3px">chunk-vendors.785f1d04.js:37</span>)</div>
<div class="t" style="left:584.5px;top:1361.15px;font-size:22px;color:#ff0000;font-family:'Liberation Mono', monospace">at ut (<span style="color:#555;text-decoration:underline;text-underline-offset:3px">chunk-vendors.785f1d04.js:37</span>)</div>
<svg style="position:absolute;left:500px;top:1399px;" width="14" height="18" viewBox="0 0 14 18"><path d="M3 2 L10 9 L3 16" fill="none" stroke="#1a73e8" stroke-width="3"/></svg>
</body></html>
